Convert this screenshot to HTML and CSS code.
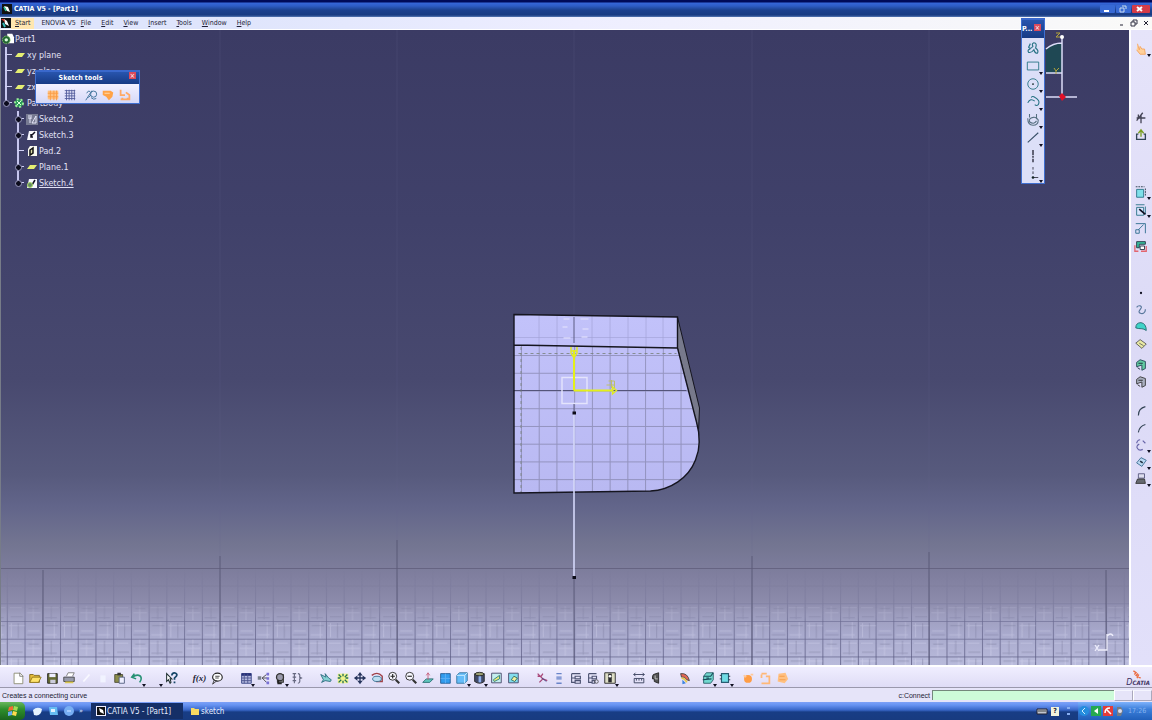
FILE: index.html
```html
<!DOCTYPE html>
<html lang="en">
<head>
    <meta charset="UTF-8">
    <meta name="viewport" content="width=device-width, initial-scale=1.0">
    <title>CATIA V5 - [Part1]</title>
    <link rel="stylesheet" href="styles.css">
</head>
<body>
    <header class="titlebar">
        <svg class="app-icon" viewBox="0 0 10 10"><rect width="10" height="10" fill="#111"/><path d="M2 2l4 1 2 5-3-1z" fill="#fff"/><path d="M2 3l2 4" stroke="#3c9" stroke-width="1.5"/></svg>
        <h1>CATIA V5 - [Part1]</h1>
        <div class="window-buttons">
            <button aria-label="Minimize"><svg viewBox="0 0 14 8"><path d="M4 6h5" stroke="#fff" stroke-width="2"/></svg></button>
            <button aria-label="Restore"><svg viewBox="0 0 14 8"><path d="M6 1h4v3M4 3h4v4H4z" stroke="#cde" fill="none"/></svg></button>
            <button class="close" aria-label="Close"><svg viewBox="0 0 14 8"><path d="M5 2l5 4M10 2L5 6" stroke="#fff" stroke-width="2"/></svg></button>
        </div>
    </header>

    <nav class="menubar">
        <svg class="app-icon" viewBox="0 0 10 10"><rect width="10" height="10" fill="#111"/><path d="M3 1l3 2 2 5-4-2z" fill="#fff"/><path d="M0 1h3l1 3z" fill="#d32"/><path d="M2 5l2 4" stroke="#3bb" stroke-width="2"/></svg>
        <button class="start"><u>S</u>tart</button>
        <button class="enovia">ENOVIA V5</button>
        <button><u>F</u>ile</button>
        <button><u>E</u>dit</button>
        <button><u>V</u>iew</button>
        <button><u>I</u>nsert</button>
        <button><u>T</u>ools</button>
        <button><u>W</u>indow</button>
        <button><u>H</u>elp</button>
        <div class="doc-buttons">
            <button aria-label="Minimize document"><svg viewBox="0 0 8 8"><path d="M2 6h3" stroke="#223"/></svg></button>
            <button aria-label="Restore document"><svg viewBox="0 0 8 8"><path d="M3 3V1h4v4H5M1 3h4v4H1z" stroke="#334" fill="none"/></svg></button>
            <button aria-label="Close document"><svg viewBox="0 0 8 8"><path d="M2 2l4 4M6 2L2 6" stroke="#223"/></svg></button>
        </div>
    </nav>

    <main>
        <section class="viewport">
            <svg class="scene" viewBox="0 30 1129 635" preserveAspectRatio="xMidYMid slice">
                <defs>
                    <linearGradient id="fade" x1="0" y1="0" x2="0" y2="1">
                        <stop offset="0" stop-color="#fff" stop-opacity="0"/>
                        <stop offset="0.35" stop-color="#fff" stop-opacity="0.3"/>
                        <stop offset="0.55" stop-color="#fff" stop-opacity="0.7"/>
                        <stop offset="1" stop-color="#fff" stop-opacity="1"/>
                    </linearGradient>
                    <linearGradient id="face" x1="0" y1="0" x2="0" y2="1">
                        <stop offset="0" stop-color="#c2c2fa"/>
                        <stop offset="1" stop-color="#b9b9f2"/>
                    </linearGradient>
                    <pattern id="minor" x="6.3" y="390.5" width="17.73" height="17.73" patternUnits="userSpaceOnUse">
                        <path d="M0.5 0V17.73" stroke="#55557c" stroke-opacity="0.75"/>
                        <path d="M0 0.5H17.73" stroke="#55557c" stroke-opacity="0.65"/>
                    </pattern>
                    <pattern id="fine" x="6.3" y="390.5" width="53.2" height="35.46" patternUnits="userSpaceOnUse">
                        <path d="M3 4.5H15M20 9.5H34M37 4.5H52M2 22.5H18M21 27.5H33M38 31.5H50M4.500 20V34M26.500 1V17M47.500 19V35" stroke="#e0e1f8" stroke-opacity="0.4"/>
                        <path d="M4 13.5H16M22 5.5H32M38 14.5H50M20 31.5H34M39 22.5H51M11.500 20V35M44.500 2V16" stroke="#5e5e80" stroke-opacity="0.35"/>
                    </pattern>
                    <pattern id="cells" x="6.3" y="390.5" width="17.73" height="17.73" patternUnits="userSpaceOnUse">
                        <path d="M0.5 0V17.73M0 0.5H17.73" stroke="#6a6a88" stroke-opacity="0.5"/>
                    </pattern>
                    <mask id="fade-mask"><rect y="570" width="1129" height="95" fill="url(#fade)"/></mask>
                </defs>

                <!-- sketch grid -->
                <g mask="url(#fade-mask)">
                    <rect y="570" width="1129" height="95" fill="url(#minor)"/>
                    <rect y="606" width="1129" height="59" fill="url(#fine)"/>
                </g>
                <path d="M42.5 570V665M219.5 556V665M396.5 540V665M573.5 578V665M751.5 556V665M928.5 552V665M1105.5 570V665" stroke="#50506e" stroke-opacity="0.75"/>
                <path d="M0 568.5H1129" stroke="#5c5a78" stroke-opacity="0.7"/>
                <path d="M219.5 30V556M396.5 30V540M573.5 30V314M751.5 30V556M928.5 30V552" stroke="#6a6a8c" stroke-opacity="0.2"/>

                <!-- part -->
                <path d="M677 317L699 408 698 432 677 348z" fill="#77798b" stroke="#15151f"/>
                <path d="M513.5 314.5L677 317 677 348 696 422C700 436 700 448 695 460 688 478 670 490 650 491L513.5 493z" fill="url(#face)"/>
                <path d="M513.5 345L677 348 696 422C700 436 700 448 695 460 688 478 670 490 650 491L513.5 493z" fill="url(#cells)"/>
                <path d="M538.5 315V345M556.5 315V345M591.5 315V345M609.5 316V346M627.5 316V346M645.5 316V347M662.5 316V347M514 337.5H676" stroke="#a0a0d4" stroke-opacity="0.6"/>
                <path d="M563 319h6M580 319h8M562 327h5M582 329h6M563 338h7M581 337h6" stroke="#dcdafc" stroke-width="2" stroke-opacity="0.7"/>
                <path d="M513.5 390.5H686" stroke="#55557a"/>
                <path d="M520.5 347V492M518 353.5H676" stroke="#777f78" stroke-opacity="0.8" stroke-dasharray="3 3"/>
                <path d="M513.5 314.5L677 317 677 348 696 422C700 436 700 448 695 460 688 478 670 490 650 491L513.5 493zM513.5 345L677 348" fill="none" stroke="#15151f" stroke-width="1.4"/>

                <!-- axis system -->
                <path d="M561.5 377.5h25v26h-25z" fill="none" stroke="#e4e4fc" stroke-width="1.4"/>
                <path d="M573.5 390.5V350M573.5 390.5H613" stroke="#e4f01a" stroke-width="2"/>
                <path d="M570.5 347v6l3 5 3-5v-6M570.5 351h6M612 387l4 3.500-4 3.500z" fill="none" stroke="#e0ea20" stroke-width="1.4"/>
                <path d="M606 385h8M608 381h6v7M611 380v8" fill="none" stroke="#bcbf6c"/>
                <path d="M573.5 317V343M573.5 404V412" stroke="#5c5c82"/>
                <path d="M573.5 413V577" stroke="#d5d8fa" stroke-width="1.6"/>
                <path d="M572 411.500h3.500v3H572zM572 576h3.500v3H572z" fill="#0c0c18"/>
            </svg>

            <ul class="tree">
                <li>
                    <a href="#part1"><svg viewBox="0 0 16 14"><path d="M7 1h6l2 4v7H8z" fill="#fff"/><circle cx="6" cy="8" r="4.500" fill="#263" stroke="#8c6" stroke-dasharray="2 1"/><circle cx="6" cy="8" r="2" fill="#dfd"/></svg>Part1</a>
                    <ul>
                        <li><a href="#xy"><svg viewBox="0 0 14 10"><path d="M5 3h7l-3 4H2z" fill="#e4ee72"/></svg>xy plane</a></li>
                        <li><a href="#yz"><svg viewBox="0 0 14 10"><path d="M5 3h7l-3 4H2z" fill="#e4ee72"/></svg>yz plane</a></li>
                        <li><a href="#zx"><svg viewBox="0 0 14 10"><path d="M5 3h7l-3 4H2z" fill="#e4ee72"/></svg>zx plane</a></li>
                        <li class="knot">
                            <a href="#body"><svg viewBox="0 0 14 12"><circle cx="6" cy="6" r="4" fill="#2a9c58" stroke="#9e9" stroke-width="2" stroke-dasharray="2 2"/><path d="M4 4l4 4M8 4L4 8" stroke="#dfd"/></svg>PartBody</a>
                            <ul>
                                <li class="knot"><a href="#s2"><svg viewBox="0 0 14 12"><path d="M1 1h12v11H1z" fill="#777a92"/><path d="M3 3h4M3 5h3M5 10V5h2M11 3L7 10h4z" stroke="#e6e6fa" fill="none"/></svg>Sketch.2</a></li>
                                <li class="knot"><a href="#s3"><svg viewBox="0 0 14 12"><path d="M4 2h8v9H2z" fill="#f8f8ff"/><path d="M6 7l4-4M6 5v3h2" stroke="#112" stroke-width="1.500" fill="none"/></svg>Sketch.3</a></li>
                                <li><a href="#p2"><svg viewBox="0 0 14 12"><path d="M5 1h7v10H3V4z" fill="#fafaf0"/><path d="M5 5l3-2v5l-3 2z" fill="#dda" stroke="#111" stroke-width="1.500"/></svg>Pad.2</a></li>
                                <li class="knot"><a href="#pl1"><svg viewBox="0 0 14 10"><path d="M5 3h7l-3 4H2z" fill="#e4ee72"/></svg>Plane.1</a></li>
                                <li class="knot"><a class="current" href="#s4"><svg viewBox="0 0 14 12"><path d="M4 2h8v9H2z" fill="#f8f8ff"/><path d="M7 8l3-5" stroke="#112" stroke-width="1.500"/><circle cx="5" cy="8" r="2.500" fill="#686" stroke="#ad6"/></svg>Sketch.4</a></li>
                            </ul>
                        </li>
                    </ul>
                </li>
            </ul>

            <svg class="compass" viewBox="0 0 34 74"><path d="M2 19Q9 13 18 13V43H2z" fill="#1f4854"/><path d="M2 19Q9 13 18 13M2 43H18M2 67H33M18 7V67" stroke="#dcdcf8" stroke-width="1.500" fill="none"/><circle cx="18" cy="7" r="2" fill="#fff"/><path d="M12 3h4l-4 4h4M10 38l2 3 3-3M12 41v3" stroke="#b5a53a" fill="none"/><path d="M15 66l3-3 4 4-4 4z" fill="#e01028"/></svg>
            <svg class="axis" viewBox="0 0 24 24"><path d="M14 3v16H6M14 5q4-4 6 0M2 14l4 6M6 14l-4 6" stroke="#eeeefc" stroke-width="1.300" fill="none"/></svg>
        </section>

        <aside class="side-tools">
            <div class="group workbench">
                <button class="drop" aria-label="Sketcher"><svg viewBox="0 0 16 16"><path d="M4 2l2 7 1-4 2 3 3 0 1 6H7L3 9" fill="#ffd09a" stroke="#f5a45c"/></svg></button>
            </div>
            <div class="group exit">
                <button aria-label="Center graph"><svg viewBox="0 0 16 16"><path d="M3 8h10M8 5v9M3 11l7-9M5 4v5" stroke="#445" stroke-width="1.500"/></svg></button>
                <button aria-label="Exit workbench"><svg viewBox="0 0 16 16"><path d="M5 7H3v6h10V7h-2" fill="none" stroke="#345" stroke-width="1.500"/><path d="M8 10V3M5 6l3-4 3 4" stroke="#7a9e20" stroke-width="1.500" fill="none"/></svg></button>
            </div>
            <div class="group edit">
                <button class="drop" aria-label="Constraint"><svg viewBox="0 0 16 16"><path d="M3 5h8v9H3z" fill="#7fe0ea" stroke="#257086"/><path d="M2 2h10M13 4v9" stroke="#234" stroke-dasharray="2 1"/></svg></button>
                <button class="drop" aria-label="Contact constraint"><svg viewBox="0 0 16 16"><path d="M3 5h8v9H3zM2 2h10M13 4v9" fill="#d8e4fc" stroke="#257086"/><path d="M6 7l7 6" stroke="#112" stroke-width="2"/></svg></button>
                <button aria-label="Animate constraint"><svg viewBox="0 0 16 16"><path d="M2 10h4v4H2zM5 10l6-6M2 3h11v11" fill="none" stroke="#286a8c"/></svg></button>
                <button aria-label="Edit multi-constraint"><svg viewBox="0 0 16 16"><path d="M3 3h10v3H6v4H3z" fill="#39bd9c" stroke="#234"/><path d="M1 7v7h4M8 14h6V8" fill="none" stroke="#e3656e" stroke-width="1.500"/><path d="M7 8h5v4H7z" fill="#fff" stroke="#234"/></svg></button>
            </div>
            <div class="group wire">
                <button aria-label="Point"><svg viewBox="0 0 16 16"><circle cx="8" cy="8" r="1.300" fill="#112"/></svg></button>
                <button aria-label="Spline"><svg viewBox="0 0 16 16"><path d="M3 5c2-3 7-2 5 1s-4 5 0 6 5-3 5-5" fill="none" stroke="#58779c" stroke-width="1.300"/></svg></button>
                <button aria-label="Surface"><svg viewBox="0 0 16 16"><path d="M2 9q0-6 6-6 6 1 6 9-3-2-5-2-4 0-7-1z" fill="#3fd3c8" stroke="#24656c"/></svg></button>
                <button aria-label="Patch"><svg viewBox="0 0 16 16"><path d="M2 7l5-4 7 5-5 5z" fill="#e9e9a2" stroke="#555"/><path d="M6 7l5 3" stroke="#666"/></svg></button>
            </div>
            <div class="group solids">
                <button aria-label="Intersect"><svg viewBox="0 0 16 16"><path d="M3 5l4-3 6 2v8l-4 2V8L3 10z" fill="#62cba2" stroke="#245"/><path d="M5 6h5M4 11l3 2" stroke="#123"/></svg></button>
                <button aria-label="Project"><svg viewBox="0 0 16 16"><path d="M3 5l4-3 6 2v8l-4 2V8L3 10z" fill="#aab0c0" stroke="#333"/><path d="M5 6h5M4 11l3 2" stroke="#222"/></svg></button>
            </div>
            <div class="group operate">
                <button aria-label="Corner"><svg viewBox="0 0 16 16"><path d="M5 13q0-8 8-10" fill="none" stroke="#345" stroke-width="1.300"/></svg></button>
                <button aria-label="Chamfer"><svg viewBox="0 0 16 16"><path d="M5 13q1-7 8-9" fill="none" stroke="#345" stroke-width="1.300"/></svg></button>
                <button class="drop" aria-label="Trim"><svg viewBox="0 0 16 16"><path d="M3 6q1-4 4-4M10 3l3 3M6 7q-4 2-2 5t6 1" fill="none" stroke="#6764a8" stroke-width="1.300"/></svg></button>
                <button class="drop" aria-label="Mirror"><svg viewBox="0 0 16 16"><path d="M3 9l5-6 6 3-5 7z" fill="#bbd9f3" stroke="#37698e"/><path d="M7 7l3 2" stroke="#234" stroke-width="2"/></svg></button>
                <button class="drop" aria-label="3D geometry"><svg viewBox="0 0 16 16"><path d="M5 2h7v5H5z" fill="#dde" stroke="#55557c"/><path d="M4 8h8l1 5H2z" fill="#666a70" stroke="#333"/></svg></button>
            </div>
        </aside>

        <section class="palette sketch-tools">
            <h2>Sketch tools</h2>
            <button class="palette-close" aria-label="Close sketch tools">×</button>
            <div class="palette-body">
                <button aria-label="Grid"><svg viewBox="0 0 16 16"><path d="M2 3h12v10H2z" fill="#ffc181"/><path d="M2 6h12M2 10h12M5 3v11M9 3v11M12 3v11" stroke="#f99c45"/></svg></button>
                <button aria-label="Snap to point"><svg viewBox="0 0 16 16"><path d="M2 3h12M2 6h12M2 9h12M2 12h12M4 2v12M7 2v12M10 2v12M13 2v12" stroke="#525c9b"/></svg></button>
                <button class="spaced" aria-label="Construction element"><svg viewBox="0 0 16 16"><path d="M2 14L9 3M3 6q2-4 4-2M5 11l3-3" stroke="#356a94" fill="none"/><circle cx="11" cy="7" r="3.500" fill="none" stroke="#356a94"/><path d="M8 11q3 3 6 1" stroke="#356a94" fill="none"/></svg></button>
                <button aria-label="Geometrical constraints"><svg viewBox="0 0 16 16"><path d="M2 3h9l3 2-1 5-4 4-3-4-4-2z" fill="#ffa347"/><path d="M4 6h6" stroke="#ffe0b8"/></svg></button>
                <button aria-label="Dimensional constraints"><svg viewBox="0 0 16 16"><path d="M3 2v6h5M9 5l4 3v5H3M5 11v3M11 11v3" stroke="#ffa965" stroke-width="2" fill="none"/></svg></button>
            </div>
        </section>

        <section class="palette profile">
            <h2>P...</h2>
            <button class="palette-close" aria-label="Close profile">×</button>
            <div class="palette-body">
                <button aria-label="Profile"><svg viewBox="0 0 16 16"><path d="M5 9Q1 10 3 13q3 1 6-3 1 4 4 4 2-3-2-6 2-6-2-6-3 1-1 4-3 4-5 1 1-2 2-4" fill="none" stroke="#267284" stroke-width="1.300"/></svg></button>
                <button class="drop" aria-label="Rectangle"><svg viewBox="0 0 16 16"><path d="M1.500 3.500h13v9h-13z" fill="none" stroke="#267284"/></svg></button>
                <button class="drop" aria-label="Circle"><svg viewBox="0 0 16 16"><circle cx="8" cy="8" r="6" fill="none" stroke="#267284"/><circle cx="8" cy="8" r="1" fill="#122"/></svg></button>
                <button class="drop" aria-label="Spline"><svg viewBox="0 0 16 16"><path d="M6 3q1-2 3-1 8 4 5 9-2 2-4 0M2 9q3-6 8-2" fill="none" stroke="#267284" stroke-width="1.200"/></svg></button>
                <button class="drop" aria-label="Conic"><svg viewBox="0 0 16 16"><path d="M4 1v4M12 1v6M2 6q0 8 6 8t6-6q-2-4-6-3-5 1-4 5 5 4 8-1" fill="none" stroke="#566f80" stroke-width="1.200"/></svg></button>
                <button class="drop" aria-label="Line"><svg viewBox="0 0 16 16"><path d="M2 13L14 2" stroke="#364e66" stroke-width="1.200"/></svg></button>
                <button aria-label="Axis"><svg viewBox="0 0 16 16"><path d="M8 1v14" stroke="#223" stroke-width="1.500" stroke-dasharray="6 1 2 1"/></svg></button>
                <button class="drop" aria-label="Point"><svg viewBox="0 0 16 16"><path d="M8 0v3M8 5v3M8 12h6" stroke="#334"/><circle cx="8" cy="12" r="1.500" fill="#122"/></svg></button>
            </div>
        </section>
    </main>

    <section class="toolbar">
        <div class="group">
            <button aria-label="New"><svg viewBox="0 0 16 16"><path d="M3.500 2.500h7l3 3v9h-10z" fill="#fff" stroke="#8a8a70"/><path d="M10 2v4h4" fill="none" stroke="#777"/></svg></button>
            <button aria-label="Open"><svg viewBox="0 0 16 16"><path d="M2 13V4h4l1 1h6v8z" fill="#e7bd3b" stroke="#7d651c"/><path d="M2 13l3-6h10l-3 6z" fill="#ffe36b" stroke="#8d741c"/></svg></button>
            <button aria-label="Save"><svg viewBox="0 0 16 16"><path d="M3 3h11v11H3z" fill="#656a34" stroke="#222"/><path d="M5 3h7v4H5z" fill="#eef"/><path d="M6 10h6v4H6z" fill="#ccd"/></svg></button>
            <button aria-label="Print"><svg viewBox="0 0 16 16"><path d="M5 6l2-4h7l-2 4" fill="#fff" stroke="#777"/><path d="M2 7h12v5H2z" fill="#9699ab" stroke="#444"/><path d="M4 12h9v2H3z" fill="#d9c650"/></svg></button>
            <button aria-label="Cut"><svg viewBox="0 0 16 16"><path d="M5 12l7-8" stroke="#f8f8ff" stroke-width="2"/></svg></button>
            <button aria-label="Copy"><svg viewBox="0 0 16 16"><path d="M5 5h6v8H5z" fill="#f1f3ff"/></svg></button>
            <button aria-label="Paste"><svg viewBox="0 0 16 16"><path d="M2 4h9v9H2z" fill="#8b8c4a" stroke="#4a4a35"/><path d="M5 2h4v3H5z" fill="#333"/><path d="M7 7h6v7H7z" fill="#eef" stroke="#4e5a7c"/></svg></button>
            <button class="drop" aria-label="Undo"><svg viewBox="0 0 16 16"><path d="M5 3L2 7l5 2M3 7q5-4 9-1 2 3-1 7" fill="none" stroke="#269174" stroke-width="1.800"/></svg></button>
            <button class="drop" aria-label="Redo"></button>
            <button aria-label="What's this"><svg viewBox="0 0 16 16"><path d="M3 3v9l2-2 2 4 1-1-1-4h2z" fill="#fff" stroke="#233" stroke-width="1.200"/><path d="M9 5q0-3 3-3 4 1 2 4l-2 2v2M12 12v2" stroke="#164668" stroke-width="2" fill="none"/></svg></button>
        </div>
        <div class="group">
            <button aria-label="Formula"><i class="fx">f(x)</i></button>
            <button aria-label="Comment"><svg viewBox="0 0 16 16"><ellipse cx="8.500" cy="7" rx="5.500" ry="4.500" fill="#fff" stroke="#222" stroke-width="1.300"/><path d="M5 10l-2 5 5-4M6 6h5M6 8h4" stroke="#333" fill="none"/></svg></button>
        </div>
        <div class="group">
            <button class="drop" aria-label="Design table"><svg viewBox="0 0 16 16"><path d="M3 3h11v11H3z" fill="#b5bae0" stroke="#334084"/><path d="M3 4h11" stroke="#273078" stroke-width="3"/><path d="M3 8h11M3 11h11M6 3v11M10 3v11" stroke="#4b548e"/></svg></button>
            <button aria-label="Law"><svg viewBox="0 0 16 16"><path d="M7 8l5-4M7 8h6M7 8l5 5" stroke="#444"/><path d="M2 6h4v4H2z" fill="#78808c"/><path d="M12 2h3v3h-3zM12 7h3v3h-3zM12 12h3v3h-3z" fill="#7971d5"/></svg></button>
            <button class="drop" aria-label="Knowledge inspector"><svg viewBox="0 0 16 16"><path d="M5 4h7v9H5z" fill="#777" stroke="#333"/><circle cx="8" cy="7" r="4" fill="#99a" stroke="#333" stroke-width="1.500"/><path d="M6 10v4h4" stroke="#222" stroke-width="2" fill="none"/></svg></button>
            <button aria-label="Equivalent dimensions"><svg viewBox="0 0 16 16"><path d="M3 3h4M3 7h4M3 11h4M5 3v11M9 3q3 0 2 4l2 1-2 1q1 5-2 5" fill="none" stroke="#666880" stroke-width="1.300"/></svg></button>
        </div>
        <div class="group">
            <button aria-label="Fly mode"><svg viewBox="0 0 16 16"><path d="M2 4l6 3-1-4 4 5 3 2-1 2-6-1-4 2 2-3z" fill="#84d1d2" stroke="#29687c"/></svg></button>
            <button aria-label="Fit all in"><svg viewBox="0 0 16 16"><path d="M2 3h12v11H2z" fill="#f0f48c"/><path d="M3 4l3 3M13 4l-3 3M3 13l3-3M13 13l-3-3M8 3v3M8 14v-3M2 8h3M14 8h-3" stroke="#237057" stroke-width="1.500"/></svg></button>
            <button aria-label="Pan"><svg viewBox="0 0 16 16"><path d="M8 3v10M3 8h10" stroke="#26345c" stroke-width="1.500"/><path d="M8 1l3 4H5zM8 15l-3-4h6zM1 8l4-3v6zM15 8l-4 3V5z" fill="#26345c"/></svg></button>
            <button aria-label="Rotate"><svg viewBox="0 0 16 16"><path d="M2 5q7-5 12 1v6H7" fill="none" stroke="#a04148" stroke-width="1.500"/><ellipse cx="8" cy="9" rx="5" ry="3" fill="#bedff2" stroke="#346b8e"/></svg></button>
            <button aria-label="Zoom in"><svg viewBox="0 0 16 16"><circle cx="6.500" cy="6" r="4.500" fill="#f8f8ff" stroke="#222"/><path d="M4 6h5M6.500 3.500v5" stroke="#222" stroke-width="1.300"/><path d="M10 10l4 4" stroke="#333" stroke-width="2.500"/></svg></button>
            <button aria-label="Zoom out"><svg viewBox="0 0 16 16"><circle cx="6.500" cy="6" r="4.500" fill="#f8f8ff" stroke="#222"/><path d="M4 6h5" stroke="#222" stroke-width="1.300"/><path d="M10 10l4 4" stroke="#333" stroke-width="2.500"/></svg></button>
            <button aria-label="Normal view"><svg viewBox="0 0 16 16"><path d="M2 13l4-4h8l-4 4z" fill="#5fc5bc" stroke="#286c72"/><path d="M8 10V3M6 5l2-3 2 3" stroke="#c55c78" fill="none"/></svg></button>
            <button aria-label="Create multi-view"><svg viewBox="0 0 16 16"><path d="M3 3h11v11H3z" fill="#329cee" stroke="#235a92"/><path d="M8.500 3v11M3 8.500h11" stroke="#5fb0f5"/></svg></button>
            <button class="drop" aria-label="Isometric view"><svg viewBox="0 0 16 16"><path d="M2 5l3-3h9v9l-3 3H2z" fill="#65bcf8" stroke="#34739e"/><path d="M2 5h9v9M11 5l3-3" fill="none" stroke="#d5f0ff"/></svg></button>
            <button class="drop" aria-label="Shading"><svg viewBox="0 0 16 16"><path d="M3 3h11v9q-5 4-11 0z" fill="#414a68" stroke="#222"/><ellipse cx="8.500" cy="3.500" rx="5" ry="2" fill="#9a9d72" stroke="#222"/><path d="M9 6v7" stroke="#8fb0ee" stroke-width="3"/></svg></button>
            <button aria-label="Hide/Show"><svg viewBox="0 0 16 16"><path d="M3 2.500h11v11H3z" fill="#c4edee" stroke="#446"/><path d="M5 10l7-5v4l-6 3z" fill="#e8e77e" stroke="#297e78"/></svg></button>
            <button aria-label="Swap visible space"><svg viewBox="0 0 16 16"><path d="M3 2.500h11v11H3z" fill="#83dced" stroke="#446"/><path d="M6 10l3-4 4 2-3 4z" fill="#f0efa0" stroke="#29685c"/></svg></button>
        </div>
        <div class="group">
            <button aria-label="Axis system"><svg viewBox="0 0 16 16"><path d="M3 3l6 6 5 2M3 6h4l2-3M9 9l-4 4" fill="none" stroke="#a84778" stroke-width="1.500"/><path d="M8 8l5 4" stroke="#3d4c8b"/></svg></button>
            <button aria-label="Mean dimensions"><svg viewBox="0 0 16 16"><path d="M5 3h6M5 7h6M5 9h6M5 14h6" stroke="#6984c9" stroke-width="1.500"/></svg></button>
            <button aria-label="Catalog"><svg viewBox="0 0 16 16"><path d="M3 3h10M3 3v10h4M3 8h4M7 6h6v3H7zM7 11h6v3H7z" fill="none" stroke="#4d5372" stroke-width="1.300"/></svg></button>
            <button aria-label="Product tree"><svg viewBox="0 0 16 16"><path d="M3 3h9M3 3v10h4M3 8h4M7 6h5v3H7zM7 11h3v3H7z" fill="none" stroke="#4d5372" stroke-width="1.300"/><circle cx="12" cy="12" r="2" fill="none" stroke="#555"/></svg></button>
            <button class="drop" aria-label="Apply material"><svg viewBox="0 0 16 16"><path d="M2 2h12v12H2z" fill="#ddddc5" stroke="#222"/><path d="M6 3h4v10H6z" fill="#29292d"/><circle cx="8" cy="6" r="1.500" fill="#fff"/></svg></button>
        </div>
        <div class="group">
            <button aria-label="Measure between"><svg viewBox="0 0 16 16"><path d="M2 4h12M4 2L2 4l2 2M12 2l2 2-2 2M2.500 8.500h11v5h-11zM5 9v2M8 9v2M11 9v2" fill="none" stroke="#333b58"/></svg></button>
            <button aria-label="Measure item"><svg viewBox="0 0 16 16"><path d="M5 4l6-2v12l-5-2V9H4V6z" fill="#555" stroke="#222"/><path d="M7 5v4h3" stroke="#ccc" fill="none"/></svg></button>
        </div>
        <div class="group">
            <button aria-label="Render"><svg viewBox="0 0 16 16"><path d="M3 3q8-1 10 8l-3-1Q8 6 4 7z" fill="#e36754" stroke="#444"/><path d="M4 8q4 0 6 5" fill="none" stroke="#e7c94c" stroke-width="2"/><path d="M5 10l4 4-4 1z" fill="#3e83df"/></svg></button>
        </div>
        <div class="group near">
            <button class="drop" aria-label="Cut part by sketch plane"><svg viewBox="0 0 16 16"><path d="M3 6l3-4h8v8l-3 4H3z" fill="#71d8cf" stroke="#265b65"/><path d="M3 6h8l3-4M2 10l10-1M6 8h3" fill="none" stroke="#174858" stroke-width="1.300"/></svg></button>
            <button class="drop" aria-label="Diagnostic"><svg viewBox="0 0 16 16"><path d="M4 3h8v10H4z" fill="#70dce5" stroke="#285c72" stroke-width="1.300"/><path d="M2 5h2M2 9h2M12 6h2M12 10h2" stroke="#234"/></svg></button>
        </div>
        <div class="group near">
            <button aria-label="Dimensional display"><svg viewBox="0 0 16 16"><circle cx="8" cy="9" r="4.500" fill="#ff9d45"/><path d="M3 5l3 2M11 4l3 0" stroke="#ffc898" stroke-width="2"/></svg></button>
            <button aria-label="Geometric display"><svg viewBox="0 0 16 16"><path d="M4 3h6M4 4v4M9 6h4v8H4" fill="none" stroke="#ffb877" stroke-width="2"/></svg></button>
            <button aria-label="Grid display"><svg viewBox="0 0 16 16"><path d="M4 3l8-1 3 7-4 5-8-2z" fill="#ffc081"/><path d="M5 6h6M5 10h7" stroke="#f49a45"/></svg></button>
        </div>
        <div class="logo">
            <svg viewBox="0 0 12 10"><path d="M2 1l3 2-2 2M7 4l-2 2 5 3M8 5l-2 4" fill="none" stroke="#eb6d43" stroke-width="1.500"/></svg>
            <span><i>D</i>CATIA</span>
        </div>
    </section>

    <section class="statusbar">
        <p>Creates a connecting curve</p>
        <label for="power">c:Connect</label>
        <input id="power" type="text">
        <button aria-label="Power input options"></button>
        <button aria-label="Status"></button>
    </section>

    <footer class="taskbar">
        <button class="start-button" aria-label="Start menu"><svg viewBox="0 0 12 12"><path d="M2 2l4-1v4L1 6z" fill="#f36a32"/><path d="M7 1l4 1-1 4-4-1z" fill="#a4dd54"/><path d="M1 7l4-1v4l-4 1z" fill="#68acef"/><path d="M6 6l4 1-1 4-4-1z" fill="#ffdb4d"/></svg></button>
        <div class="quick">
            <a href="#messenger" aria-label="Messenger"><svg viewBox="0 0 12 12"><path d="M2 5q4-4 9-1-1 8-8 6z" fill="#e5f3ff"/></svg></a>
            <a href="#desktop" aria-label="Desktop"><svg viewBox="0 0 12 12"><path d="M2 2h8l1 8H3z" fill="#66bdf3"/><path d="M4 4h4v3H4z" fill="#dff1ff"/></svg></a>
            <a href="#browser" aria-label="Browser"><svg viewBox="0 0 12 12"><circle cx="6" cy="6" r="5" fill="#77aef3"/><path d="M4 6h4" stroke="#a5cbff" stroke-width="2"/></svg></a>
            <span>»</span>
        </div>
        <button class="task active"><svg viewBox="0 0 10 10"><rect width="10" height="10" fill="#eef"/><path d="M1 1h8v8H1z" fill="#111"/><path d="M3 2l4 2 1 4-4-2z" fill="#fff"/></svg>CATIA V5 - [Part1]</button>
        <button class="task"><svg viewBox="0 0 10 10"><path d="M1 2h3l1 1h4v6H1z" fill="#f7da62"/></svg>sketch</button>
        <div class="input-status">
            <svg viewBox="0 0 12 12"><path d="M1 4h10v5H1z" fill="#c2c6cf" stroke="#223"/><path d="M2 6h8" stroke="#444"/></svg>
            <b class="help">?</b>
            <svg viewBox="0 0 12 12"><path d="M5 2h3v2H5zM5 8h3v2H5z" fill="#88aef1"/></svg>
        </div>
        <div class="tray">
            <svg viewBox="0 0 12 12"><circle cx="6" cy="6" r="5" fill="#258dde"/><path d="M7 3L4 6l3 3" fill="none" stroke="#cef"/></svg>
            <svg viewBox="0 0 12 12"><path d="M1 1h10v10H1z" fill="#26a950"/><path d="M8 3L4 6l4 3z" fill="#fff"/></svg>
            <svg viewBox="0 0 12 12"><path d="M1 1h10v10H1z" fill="#e33c39"/><path d="M3 8q0-5 5-5M5 5l4 4" fill="none" stroke="#fff" stroke-width="1.500"/></svg>
            <svg viewBox="0 0 12 12"><path d="M3 2h4l2 4-2 5H3z" fill="#737b86"/><circle cx="6" cy="6" r="2" fill="#dde"/></svg>
            <time>17:26</time>
        </div>
    </footer>
</body>
</html>
```
FILE: styles.css
```css
* {
    box-sizing: border-box;
}
body {
    margin: 0;
    height: 100vh;
    display: flex;
    flex-direction: column;
    overflow: hidden;
    font-family: "DejaVu Sans Condensed", "DejaVu Sans", sans-serif;
    font-size: 7px;
    color: #222236;
    background: #e4e2fa;
}
button, input {
    font: inherit;
    color: inherit;
    border: none;
    background: none;
    padding: 0;
    margin: 0;
}
a {
    color: inherit;
    text-decoration: none;
}
svg {
    display: block;
    flex: none;
}
.app-icon {
    width: 10px;
    height: 10px;
}

/* title and menus */
.titlebar {
    flex: none;
    height: 17px;
    display: flex;
    align-items: center;
    gap: 2px;
    padding: 0 2px;
    color: #fff;
    background: linear-gradient(#000a58 0, #000a58 2px, #3566d8 3px, #2e5cc4 6px, #1c418f 10px, #183b82 15px, #5879b4 17px);
}
.titlebar h1 {
    margin: 0;
    flex: 1;
    font-size: 7px;
    line-height: 10px;
}
.window-buttons {
    display: flex;
    gap: 1px;
}
.window-buttons button {
    width: 15px;
    height: 8px;
    background: #3769d4;
    border-radius: 1px;
}
.window-buttons svg {
    width: 14px;
    height: 8px;
}
.window-buttons .close {
    width: 18px;
    background: #d43c48;
}
.menubar {
    flex: none;
    height: 13px;
    display: flex;
    align-items: center;
    padding: 0 2px 0 1px;
    background: linear-gradient(90deg, #dfe5fc 20%, #eeeeff 50%, #fafaf8);
    border-bottom: 1px solid #fff;
}
.menubar > button {
    padding: 0 5px;
    height: 11px;
    line-height: 11px;
}
.menubar > .start {
    padding: 0 4px;
    margin-right: 2px;
    background: #ffe7b0;
}
.menubar > .enovia {
    padding-right: 0;
}
.doc-buttons {
    display: flex;
    gap: 4px;
    margin-left: auto;
}
.doc-buttons svg {
    width: 8px;
    height: 8px;
}

/* work area */
main {
    flex: 1;
    min-height: 0;
    display: flex;
    position: relative;
}
.viewport {
    flex: 1;
    min-width: 0;
    position: relative;
    overflow: hidden;
    border-left: 1px solid #777c88;
    background: linear-gradient(#3b3b64 0%, #40416a 30%, #48496f 55%, #575a7d 70%, #62658a 75%, #737591 81%, #807f9f 86%, #8c8bab 90%, #9c9cbd 92%, #a8a9cc 95%, #b9bbdc 100%);
}
.scene {
    position: absolute;
    left: 0;
    top: 0;
    width: 100%;
    height: 100%;
}
.compass {
    position: absolute;
    right: 51px;
    top: 0;
    width: 34px;
    height: 74px;
}
.axis {
    position: absolute;
    right: 12px;
    bottom: 10px;
    width: 24px;
    height: 24px;
}

/* specification tree */
.tree, .tree ul {
    list-style: none;
    margin: 0;
    padding: 0;
}
.tree {
    position: relative;
    width: 140px;
    padding-top: 1px;
    color: #e2e2f6;
    font-family: "DejaVu Sans", sans-serif;
    font-size: 8px;
}
.tree ul {
    padding-left: 4px;
}
.tree ul ul {
    padding-left: 12px;
}
.tree a {
    display: flex;
    align-items: center;
    height: 16px;
}
.tree a svg {
    width: 14px;
    height: 12px;
}
.tree ul a {
    padding-left: 8px;
}
.tree li {
    position: relative;
}
.tree ul li::before {
    content: '';
    position: absolute;
    left: 0;
    top: 0;
    height: 100%;
    border-left: 2px solid #c6c6ee;
}
.tree ul li:last-child::before {
    height: 8px;
}
.tree ul a::before {
    content: '';
    position: absolute;
    left: 0;
    top: 7px;
    width: 7px;
    height: 1px;
    background: #d0d0f4;
}
.knot::after {
    content: '';
    position: absolute;
    left: -2px;
    top: 5px;
    width: 5px;
    height: 5px;
    border: 1px solid #9a9ac0;
    border-radius: 50%;
    background: #0b0b1c;
}
.tree .current {
    text-decoration: underline;
}

/* floating palettes */
.palette {
    position: absolute;
    background: #2759b8;
    border: 1px solid #3f6fd0;
    border-top: 2px solid #3a68cc;
}
.palette h2 {
    margin: 0;
    color: #fff;
    font-size: 7px;
    line-height: 12px;
    text-align: center;
    background: linear-gradient(#2855ae, #173a84);
}
.palette-close {
    position: absolute;
    top: 0;
    right: 3px;
    width: 7px;
    height: 7px;
    line-height: 6px;
    color: #fff;
    background: #d94a5c;
}
.palette-body {
    display: flex;
    background: linear-gradient(#f2f0ff, #d6d9f8);
}
.sketch-tools {
    left: 35px;
    top: 40px;
    width: 105px;
}
.sketch-tools h2 {
    padding-right: 14px;
}
.sketch-tools .palette-body {
    padding: 2px 0 0 8px;
}
.sketch-tools .spaced {
    margin-left: 4px;
}
.profile {
    right: 107px;
    top: -12px;
    width: 24px;
}
.profile h2 {
    text-align: left;
    line-height: 18px;
}
.profile .palette-close {
    top: 4px;
}
.profile .palette-body {
    flex-direction: column;
    align-items: center;
    padding-top: 1px;
    background: #dcdff8;
}
.profile .palette-body button {
    height: 18px;
}

/* icon buttons */
.palette-body button, .group button {
    position: relative;
    flex: none;
    width: 17px;
    height: 17px;
    display: flex;
    align-items: center;
    justify-content: center;
}
.palette-body svg, .group svg {
    width: 14px;
    height: 14px;
}
.drop::after {
    content: '';
    position: absolute;
    right: -1px;
    bottom: 0;
    border: 2px solid transparent;
    border-top: 3px solid #111122;
    border-bottom: none;
}
.group {
    display: flex;
}
.side-tools {
    flex: none;
    width: 23px;
    padding: 10px 1px 0 0;
    border-left: 2px solid #fff;
    background: linear-gradient(#e6e4fa, #dcdaf6 50%, #e2e0fa);
}
.side-tools .group {
    flex-direction: column;
    align-items: center;
}
.side-tools .exit {
    margin-top: 52px;
}
.side-tools .edit {
    margin-top: 40px;
    gap: 1px;
}
.side-tools .wire {
    margin-top: 30px;
}
.side-tools .solids {
    margin-top: 4px;
}
.side-tools .operate {
    margin-top: 12px;
}
.toolbar {
    flex: none;
    height: 23px;
    display: flex;
    align-items: center;
    gap: 12px;
    padding: 2px 2px 0 9px;
    border-top: 2px solid #fff;
    border-bottom: 1px solid #9a98ac;
    background: linear-gradient(#f0eeff, #dfdcf6);
}
.toolbar .near {
    margin-left: -6px;
}
.fx {
    font-family: "Liberation Serif", serif;
    font-size: 9px;
    font-weight: bold;
}
.logo {
    margin-left: auto;
    color: #3d315f;
    font-style: italic;
    line-height: 7px;
}
.logo svg {
    width: 12px;
    height: 9px;
    margin-left: 5px;
}
.logo span {
    display: block;
    font-size: 6px;
    font-weight: bold;
}
.logo i {
    font-size: 9px;
    font-weight: normal;
}

/* status line */
.statusbar {
    flex: none;
    height: 14px;
    display: flex;
    align-items: center;
    font-family: "Liberation Sans", sans-serif;
    background: #e6e4f9;
}
.statusbar p {
    margin: 0 auto 0 2px;
}
.statusbar input {
    width: 182px;
    height: 10px;
    margin-left: 2px;
    padding: 0 2px;
    background: #cdfbd9;
    border-top: 1px solid #74887c;
    border-left: 1px solid #74887c;
}
.statusbar button {
    width: 19px;
    height: 11px;
    border: 1px solid #aaa8bc;
    border-left-color: #fff;
    border-top-color: #f5f5ff;
}

/* taskbar */
.taskbar {
    flex: none;
    height: 18px;
    display: flex;
    align-items: center;
    color: #e6eeff;
    background: linear-gradient(#7da1f7 0, #6793f2 3px, #3967c8 8px, #183d85 10px, #183b80);
}
.start-button {
    width: 25px;
    height: 18px;
    display: flex;
    align-items: center;
    justify-content: center;
    border-radius: 0 5px 5px 0;
    background: linear-gradient(#69b75d, #2e8f2c 40%, #1b641e);
}
.taskbar svg {
    width: 12px;
    height: 12px;
}
.quick {
    display: flex;
    align-items: center;
    gap: 4px;
    width: 66px;
    padding-left: 6px;
}
.task {
    height: 16px;
    display: flex;
    align-items: center;
    gap: 1px;
    padding: 0 6px 0 5px;
    font-size: 8px;
    white-space: nowrap;
}
.taskbar .task svg {
    width: 10px;
    height: 10px;
}
.task.active {
    width: 92px;
    margin-right: 2px;
    background: #152f67;
}
.input-status {
    display: flex;
    align-items: center;
    gap: 3px;
    margin-left: auto;
    padding-right: 4px;
}
.help {
    width: 8px;
    height: 9px;
    line-height: 9px;
    text-align: center;
    color: #223;
    background: #f2f3dc;
}
.tray {
    display: flex;
    align-items: center;
    width: 74px;
    height: 18px;
    background: linear-gradient(#7eb2fc, #3c7fda 40%, #2160bb);
}
.tray time {
    margin-left: 2px;
    color: #86b3ef;
}
```
